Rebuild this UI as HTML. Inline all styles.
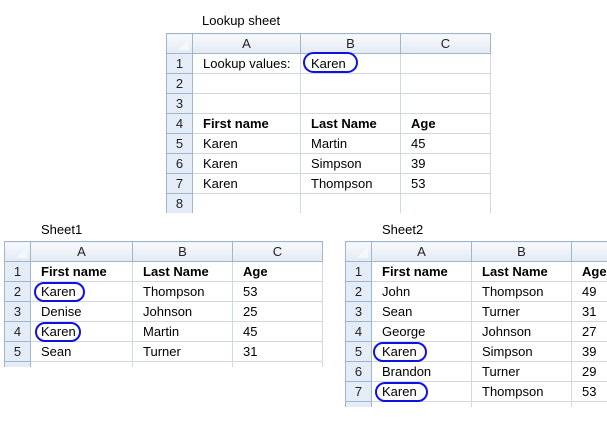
<!DOCTYPE html>
<html><head><style>
body{margin:0;width:607px;height:423px;background:#fff;position:relative;overflow:hidden;font-family:"Liberation Sans",Arial,sans-serif;font-size:13px;color:#000}
.t{position:absolute;font-size:13px}
table{position:absolute;border-collapse:collapse;table-layout:fixed}
td{height:19px;border:1px solid #d0d7e5;padding:0 0 0 10px;white-space:nowrap;overflow:hidden;font-size:13px;line-height:19px}
tr.h td{background:linear-gradient(#f7f9fc,#e4eaf3);border-color:#9eb6ce;text-align:center;padding:0;color:#222}
td.r{background:#e4ecf7;border-color:#9eb6ce;text-align:center;padding:0;color:#222}
td.c{background:#b9cde6;position:relative}
td.c:after{content:"";position:absolute;right:3px;bottom:3px;border-style:solid;border-width:0 0 11px 11px;border-color:transparent transparent #f4f7fb transparent}
b{font-weight:bold}
.o{position:absolute;border:2px solid #1010e0;border-radius:11px;box-sizing:border-box}
tr.p td{height:5px;line-height:5px;border-bottom:none}
</style></head><body>
<div class="t" style="left:202px;top:13px">Lookup sheet</div>
<table style="left:166px;top:33px;width:324px">
<col style="width:26px"><col style="width:108px"><col style="width:100px"><col style="width:90px">
<tr class="h"><td class="c"></td><td>A</td><td>B</td><td>C</td></tr>
<tr><td class="r">1</td><td>Lookup values:</td><td>Karen</td><td></td></tr>
<tr><td class="r">2</td><td></td><td></td><td></td></tr>
<tr><td class="r">3</td><td></td><td></td><td></td></tr>
<tr><td class="r">4</td><td><b>First name</b></td><td><b>Last Name</b></td><td><b>Age</b></td></tr>
<tr><td class="r">5</td><td>Karen</td><td>Martin</td><td>45</td></tr>
<tr><td class="r">6</td><td>Karen</td><td>Simpson</td><td>39</td></tr>
<tr><td class="r">7</td><td>Karen</td><td>Thompson</td><td>53</td></tr>
<tr><td class="r" style="border-bottom:none">8</td><td style="border-bottom:none"></td><td style="border-bottom:none"></td><td style="border-bottom:none"></td></tr>
</table>
<div class="o" style="left:303px;top:52px;width:55px;height:21px"></div>

<div class="t" style="left:41px;top:222px">Sheet1</div>
<table style="left:4px;top:241px;width:318px">
<col style="width:26px"><col style="width:102px"><col style="width:100px"><col style="width:90px">
<tr class="h"><td class="c"></td><td>A</td><td>B</td><td>C</td></tr>
<tr><td class="r">1</td><td><b>First name</b></td><td><b>Last Name</b></td><td><b>Age</b></td></tr>
<tr><td class="r">2</td><td>Karen</td><td>Thompson</td><td>53</td></tr>
<tr><td class="r">3</td><td>Denise</td><td>Johnson</td><td>25</td></tr>
<tr><td class="r">4</td><td>Karen</td><td>Martin</td><td>45</td></tr>
<tr><td class="r">5</td><td>Sean</td><td>Turner</td><td>31</td></tr>
<tr class="p"><td class="r"></td><td></td><td></td><td></td></tr>
</table>
<div class="o" style="left:34px;top:282px;width:51px;height:20px"></div>
<div class="o" style="left:35px;top:322px;width:46px;height:20px"></div>

<div class="t" style="left:382px;top:222px">Sheet2</div>
<table style="left:345px;top:241px;width:316px">
<col style="width:26px"><col style="width:100px"><col style="width:100px"><col style="width:90px">
<tr class="h"><td class="c"></td><td>A</td><td>B</td><td>C</td></tr>
<tr><td class="r">1</td><td><b>First name</b></td><td><b>Last Name</b></td><td><b>Age</b></td></tr>
<tr><td class="r">2</td><td>John</td><td>Thompson</td><td>49</td></tr>
<tr><td class="r">3</td><td>Sean</td><td>Turner</td><td>31</td></tr>
<tr><td class="r">4</td><td>George</td><td>Johnson</td><td>27</td></tr>
<tr><td class="r">5</td><td>Karen</td><td>Simpson</td><td>39</td></tr>
<tr><td class="r">6</td><td>Brandon</td><td>Turner</td><td>29</td></tr>
<tr><td class="r">7</td><td>Karen</td><td>Thompson</td><td>53</td></tr>
<tr class="p"><td class="r"></td><td></td><td></td><td></td></tr>
</table>
<div class="o" style="left:373px;top:342px;width:54px;height:20px"></div>
<div class="o" style="left:375px;top:382px;width:53px;height:20px"></div>
</body></html>
